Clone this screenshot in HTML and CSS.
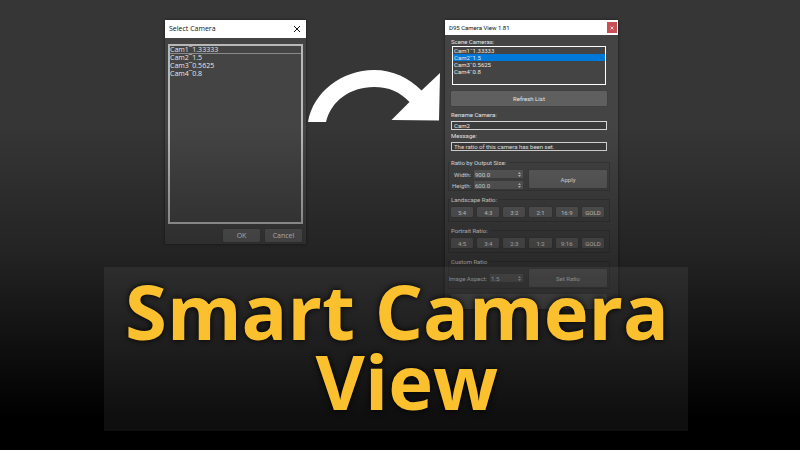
FILE: index.html
```
<!DOCTYPE html>
<html lang="en">
<head>
    <meta charset="UTF-8">
    <meta name="viewport" content="width=device-width, initial-scale=1.0">
    <title>Smart Camera View</title>
    <link rel="stylesheet" href="styles.css">
</head>
<body>
    <main class="stage">
        <div class="windows">
            <section class="window dialog">
                <header class="titlebar">
                    <span>Select Camera</span>
                    <button class="close" aria-label="Close">
                        <svg viewBox="0 0 8 8"><path d="M1 1L7 7M7 1L1 7"/></svg>
                    </button>
                </header>
                <ul class="camera-list" role="listbox" aria-label="Cameras">
                    <li class="focused" role="option">Cam1¯1.33333</li>
                    <li role="option">Cam2¯1.5</li>
                    <li role="option">Cam3¯0.5625</li>
                    <li role="option">Cam4¯0.8</li>
                </ul>
                <div class="dialog-buttons">
                    <button class="btn">OK</button>
                    <button class="btn">Cancel</button>
                </div>
            </section>

            <svg class="arrow" viewBox="308 70 132 52" aria-hidden="true">
                <path d="M308 122C313 92 342 70 374 70C393 70 409 78 421.5 90.5L440 73L439 120.5L391.5 120L409.5 102C400 92 389 87 374 87C350 87 331 101 326 122Z"/>
            </svg>

            <section class="window panel">
                <header class="titlebar">
                    <span>D95 Camera View 1.81</span>
                    <button class="close" aria-label="Close">
                        <svg viewBox="0 0 8 8"><path d="M2 2L6 6M6 2L2 6"/></svg>
                    </button>
                </header>
                <div class="panel-body">
                    <span class="caption" id="sceneLabel">Scene Cameras:</span>
                    <ul class="camera-list" role="listbox" aria-labelledby="sceneLabel">
                        <li role="option">Cam1¯1.33333</li>
                        <li class="selected" role="option" aria-selected="true">Cam2¯1.5</li>
                        <li role="option">Cam3¯0.5625</li>
                        <li role="option">Cam4¯0.8</li>
                    </ul>
                    <button class="btn refresh">Refresh List</button>

                    <label for="rename">Rename Camera:</label>
                    <input class="text" type="text" id="rename" value="Cam2">
                    <label for="message">Message:</label>
                    <input class="text" type="text" id="message" value="The ratio of this camera has been set." readonly>

                    <fieldset class="compact">
                        <legend>Ratio by Output Size:</legend>
                        <div class="size-row">
                            <div class="fields">
                                <div class="field">
                                    <label for="width">Width:</label>
                                    <span class="spin">
                                        <input type="number" id="width" value="900.0" step="0.1">
                                        <svg viewBox="0 0 4 6"><path d="M0 2L2 0L4 2ZM0 4L2 6L4 4Z"/></svg>
                                    </span>
                                </div>
                                <div class="field">
                                    <label for="height">Heigth:</label>
                                    <span class="spin">
                                        <input type="number" id="height" value="600.0" step="0.1">
                                        <svg viewBox="0 0 4 6"><path d="M0 2L2 0L4 2ZM0 4L2 6L4 4Z"/></svg>
                                    </span>
                                </div>
                            </div>
                            <button class="btn">Apply</button>
                        </div>
                    </fieldset>

                    <fieldset>
                        <legend>Landscape Ratio:</legend>
                        <div class="ratios">
                            <button class="btn">5:4</button>
                            <button class="btn">4:3</button>
                            <button class="btn">3:2</button>
                            <button class="btn">2:1</button>
                            <button class="btn">16:9</button>
                            <button class="btn">GOLD</button>
                        </div>
                    </fieldset>

                    <fieldset>
                        <legend>Portrait Ratio:</legend>
                        <div class="ratios">
                            <button class="btn">4:5</button>
                            <button class="btn">3:4</button>
                            <button class="btn">2:3</button>
                            <button class="btn">1:2</button>
                            <button class="btn">9:16</button>
                            <button class="btn">GOLD</button>
                        </div>
                    </fieldset>

                    <fieldset class="compact">
                        <legend>Custom Ratio</legend>
                        <div class="size-row">
                            <div class="fields">
                                <div class="field">
                                    <label for="aspect">Image Aspect:</label>
                                    <span class="spin">
                                        <input type="number" id="aspect" value="1.5" step="0.1">
                                        <svg viewBox="0 0 4 6"><path d="M0 2L2 0L4 2ZM0 4L2 6L4 4Z"/></svg>
                                    </span>
                                </div>
                            </div>
                            <button class="btn">Set Ratio</button>
                        </div>
                    </fieldset>
                    <button class="btn last" aria-label="Close panel"></button>
                </div>
            </section>
        </div>

        <div class="banner">
            <h1>Smart Camera<br>&nbsp;View</h1>
        </div>
    </main>
</body>
</html>
```
FILE: styles.css
```
:root {
    --stage-bg: #363636;
    --window-bg: #444444;
    --button-bg: #5f5f5f;
    --field-bg: #5c5c5c;
    --border: #d8d8d8;
    --text: #e6e6e6;
    --accent: #fbc02d;
    --select: #0078d7;
}

* {
    box-sizing: border-box;
}

body {
    margin: 0;
    background-color: #000;
    color: var(--text);
    font-family: "Open Sans", "Noto Sans", sans-serif;
}

.stage {
    position: relative;
    min-height: 100vh;
    background-color: var(--stage-bg);
}

/* darkens the desktop and the windows towards the bottom */
.stage::after {
    content: "";
    position: absolute;
    inset: 0;
    background: linear-gradient(transparent 28%, rgba(0, 0, 0, 0.35) 56%, #000 93%);
    pointer-events: none;
}

.windows {
    display: flex;
    justify-content: center;
    align-items: flex-start;
    padding: 20px 17px 0 0;
}

.window {
    background-color: var(--window-bg);
    box-shadow: 0 0 3px rgba(0, 0, 0, 0.5);
}

.titlebar {
    display: flex;
    justify-content: space-between;
    align-items: center;
    background-color: #fff;
    color: #111;
}

button,
input {
    font: inherit;
    color: inherit;
    padding: 0;
    border: none;
}

.btn {
    background-color: var(--button-bg);
    border-radius: 1px;
    box-shadow: 0 0 1px rgba(0, 0, 0, 0.5);
}

.close {
    display: flex;
    background: none;
}

.close svg {
    width: 8px;
    height: 8px;
    fill: none;
    stroke: currentColor;
}

.camera-list {
    list-style: none;
    margin: 0;
    padding: 0;
    border: 1px solid var(--border);
}

/* Select Camera */
.dialog {
    width: 141px;
    font-size: 7px;
    line-height: 8px;
}

.dialog .titlebar {
    height: 18px;
    padding: 0 5px 0 4px;
}

.dialog .camera-list {
    height: 180px;
    margin: 6px 3px 5px;
    border-width: 2px;
    border-color: #b8b8b8;
}

.dialog li {
    height: 8px;
    border-bottom: 1px solid transparent;
}

.dialog .focused {
    border-color: #8a8a8a;
}

.dialog-buttons {
    display: flex;
    justify-content: flex-end;
    gap: 5px;
    padding: 0 4px 2px;
}

.dialog-buttons .btn {
    width: 37px;
    height: 13px;
}

.arrow {
    width: 132px;
    height: 52px;
    margin: 50px 5px 0 2px;
    fill: #fff;
}

/* D95 Camera View */
.panel {
    width: 173px;
    font-family: Roboto, "Open Sans", sans-serif;
    font-size: 6px;
    line-height: 7px;
}

.panel .titlebar {
    height: 15px;
    padding: 0 1px 0 4px;
}

.panel .close {
    width: 10px;
    height: 11px;
    align-items: center;
    justify-content: center;
    background-color: #c84f55;
    color: #fff;
}

.panel .close svg {
    width: 6px;
    height: 6px;
}

.panel-body {
    display: flex;
    flex-direction: column;
    padding: 3px 8px 0 3px;
}

.panel-body > * {
    margin-left: 3px;
    margin-right: 3px;
}

.panel .camera-list {
    height: 39px;
    margin: 1px 4px 6px;
    border-color: #fff;
}

.panel li {
    padding-left: 1px;
}

.panel .selected {
    background-color: var(--select);
}

.panel .refresh {
    height: 15px;
    margin-bottom: 5px;
}

.text {
    height: 9px;
    margin-top: 3px;
    margin-bottom: 2px;
    padding: 0 2px;
    border: 1px solid var(--border);
    background-color: #3c3c3c;
}

.panel fieldset {
    min-width: 0;
    margin: 6px 0 0;
    padding: 4px 2px;
    border: 1px solid rgba(0, 0, 0, 0.15);
}

.panel fieldset + fieldset {
    margin-top: 5px;
}

.panel .compact {
    padding-bottom: 1px;
}

legend {
    padding: 0 2px 0 0;
}

.size-row {
    display: flex;
    gap: 6px;
}

.size-row .btn {
    flex: none;
    width: 78px;
    height: 18px;
}

.fields {
    flex: 1;
    min-width: 0;
    display: flex;
    flex-direction: column;
    justify-content: center;
    gap: 3px;
}

.field {
    display: flex;
    justify-content: flex-end;
    align-items: center;
    gap: 3px;
    white-space: nowrap;
}

.spin {
    display: flex;
    align-items: center;
    width: 49px;
    height: 8px;
    padding: 0 2px 0 1px;
    background-color: var(--field-bg);
}

.spin input {
    flex: 1;
    min-width: 0;
    height: 8px;
    background: none;
    appearance: textfield;
}

.spin svg {
    width: 3px;
    height: 5px;
    fill: var(--text);
}

.field:only-child .spin {
    width: 33px;
}

.ratios {
    display: grid;
    grid-template-columns: repeat(6, 1fr);
    gap: 4px;
    padding-right: 3px;
}

.ratios .btn {
    height: 10px;
}

.panel .last {
    height: 15px;
    margin-top: 5px;
}

/* title over the lower part of the desktop */
.banner {
    position: absolute;
    z-index: 1;
    left: 13%;
    bottom: 19px;
    width: 73%;
    padding: 9px 0 15px 2px;
    background-color: rgba(255, 255, 255, 0.06);
}

h1 {
    margin: 0;
    color: var(--accent);
    font-family: "Open Sans", "Noto Sans", sans-serif;
    font-size: 76px;
    font-weight: 700;
    line-height: 70px;
    text-align: center;
    white-space: nowrap;
    text-shadow: 0 0 6px #000;
}
```
